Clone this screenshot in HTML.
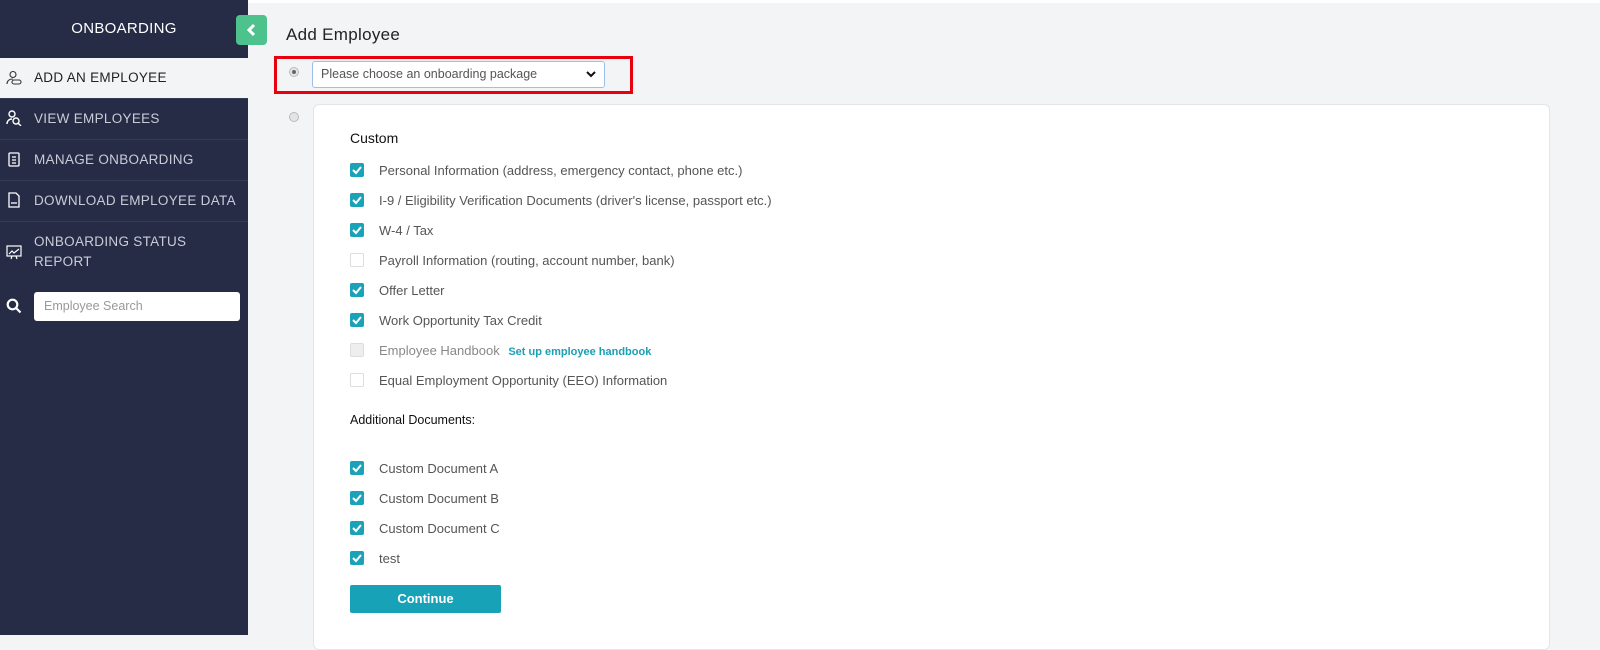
<!DOCTYPE html>
<html style="background:#f3f4f6"><head><style>
*{box-sizing:border-box;margin:0;padding:0}
body{width:1600px;height:635px;overflow:hidden;background:#f3f4f6;font-family:"Liberation Sans",sans-serif;position:relative}
.sb{position:absolute;left:0;top:0;width:248px;height:635px;background:#272c46}
.sb .hd{position:absolute;top:0;left:0;width:248px;height:58px;color:#fff;font-size:15px;text-align:center;line-height:58px;letter-spacing:.3px}
.item{position:absolute;left:0;width:248px;color:#c9ccd8;font-size:13.5px;letter-spacing:.3px;border-bottom:1px solid #353a54}
.item span{position:absolute;left:34px}
.ic{position:absolute;left:6px;width:16px;height:16px}
.act{background:#f3f4f6;color:#222;top:58px;height:41px}
.tog{position:absolute;left:236px;top:15px;width:31px;height:30px;background:#4dc28d;border-radius:4px;color:#fff;text-align:center}
.cb{position:absolute;left:350px;width:14px;height:14px;border-radius:2px;background:#1aa3b8}
.cb svg{position:absolute;left:2px;top:2px}
.cb.e{background:#fff;border:1px solid #ddd}
.cb.d{background:#eee;border:1px solid #ddd}
.lb{position:absolute;left:379px;font-size:13px;color:#555;margin-top:1px}
</style></head><body>
<div style="position:absolute;left:248px;top:0;width:1352px;height:3px;background:#fff"></div>
<div class="sb">
<div class="hd">ONBOARDING</div>
<div class="item act"><svg class="ic" style="top:12px" viewBox="0 0 16 16" fill="none" stroke="#333" stroke-width="1.1"><circle cx="7" cy="4.5" r="3"/><path d="M1 14c0-3 2-5 6-5"/><rect x="6" y="10" width="9" height="4" rx="2"/></svg><span style="top:12px">ADD AN EMPLOYEE</span></div>
<div class="item" style="top:99px;height:41px"><svg class="ic" style="top:11px" viewBox="0 0 16 16" fill="none" stroke="#fff" stroke-width="1.4"><circle cx="6" cy="4" r="3"/><path d="M1 14c0-3 2-5 5-5"/><circle cx="10" cy="11" r="3"/><path d="M12 13l3 3"/></svg><span style="top:12px">VIEW EMPLOYEES</span></div>
<div class="item" style="top:140px;height:41px"><svg class="ic" style="top:11px" viewBox="0 0 16 16" fill="none" stroke="#fff" stroke-width="1.3"><rect x="3" y="2" width="10" height="13" rx="1"/><path d="M6 6h4M6 9h4M6 12h4"/></svg><span style="top:12px">MANAGE ONBOARDING</span></div>
<div class="item" style="top:181px;height:41px"><svg class="ic" style="top:11px" viewBox="0 0 16 16" fill="none" stroke="#fff" stroke-width="1.3"><path d="M3 1h7l3 3v11H3z"/><path d="M5 11h6"/></svg><span style="top:12px">DOWNLOAD EMPLOYEE DATA</span></div>
<div class="item" style="top:222px;height:60px;border:none"><svg class="ic" style="top:22px" viewBox="0 0 16 16" fill="none" stroke="#fff" stroke-width="1.2"><rect x="1" y="2" width="14" height="10"/><path d="M3 10l3-3 2 2 5-4M5 15l1-3M11 15l-1-3"/></svg><span style="top:10px;line-height:20px">ONBOARDING STATUS<br>REPORT</span></div>
<svg style="position:absolute;left:6px;top:298px" width="16" height="16" viewBox="0 0 16 16" fill="none" stroke="#fff" stroke-width="2.2"><circle cx="6.5" cy="6.5" r="4.8"/><path d="M10 10l4.5 4.5"/></svg>
<div style="position:absolute;left:34px;top:292px;width:206px;height:29px;background:#fff;border-radius:3px;color:#999;font-size:12.5px;line-height:29px;padding-left:10px">Employee Search</div>
</div>
<div class="tog"><svg width="12" height="14" viewBox="0 0 12 14" style="margin-top:8px"><path d="M8 2L3 7l5 5" stroke="#fff" stroke-width="3" fill="none"/></svg></div>
<div style="position:absolute;left:286px;top:25px;font-size:17px;color:#222;letter-spacing:.3px">Add Employee</div>
<div style="position:absolute;left:274px;top:56px;width:359px;height:38px;border:3px solid #e8000f"></div>
<div style="position:absolute;left:289px;top:67px;width:10px;height:10px;border-radius:50%;background:#e4e4e4;border:1px solid #bbb"><div style="width:4px;height:4px;background:#666;border-radius:50%;margin:2px"></div></div>
<div style="position:absolute;left:312px;top:61px;width:293px;height:27px;background:#fff;border:1px solid #9cc0ee;border-radius:3px;font-size:12.5px;color:#555;line-height:25px;padding-left:8px">Please choose an onboarding package<svg style="position:absolute;right:8px;top:9px" width="10" height="7" viewBox="0 0 10 7"><path d="M1 1l4 4 4-4" stroke="#111" stroke-width="2" fill="none"/></svg></div>
<div style="position:absolute;left:289px;top:112px;width:10px;height:10px;border-radius:50%;background:#e4e4e4;border:1px solid #bbb"></div>
<div style="position:absolute;left:313px;top:104px;width:1237px;height:546px;background:#fff;border:1px solid #e4e5ea;border-radius:6px"></div>
<div style="position:absolute;left:350px;top:130px;font-size:14px;color:#111">Custom</div>
<div style="position:absolute;left:350px;top:413px;font-size:12.5px;color:#111">Additional Documents:</div>

<div class="cb" style="top:163px"><svg width="10" height="10" viewBox="0 0 10 10"><path d="M1 5l3 3 5-6" stroke="#fff" stroke-width="2" fill="none"/></svg></div><div class="lb" style="top:162px">Personal Information (address, emergency contact, phone etc.)</div>
<div class="cb" style="top:193px"><svg width="10" height="10" viewBox="0 0 10 10"><path d="M1 5l3 3 5-6" stroke="#fff" stroke-width="2" fill="none"/></svg></div><div class="lb" style="top:192px">I-9 / Eligibility Verification Documents (driver's license, passport etc.)</div>
<div class="cb" style="top:223px"><svg width="10" height="10" viewBox="0 0 10 10"><path d="M1 5l3 3 5-6" stroke="#fff" stroke-width="2" fill="none"/></svg></div><div class="lb" style="top:222px">W-4 / Tax</div>
<div class="cb e" style="top:253px"></div><div class="lb" style="top:252px">Payroll Information (routing, account number, bank)</div>
<div class="cb" style="top:283px"><svg width="10" height="10" viewBox="0 0 10 10"><path d="M1 5l3 3 5-6" stroke="#fff" stroke-width="2" fill="none"/></svg></div><div class="lb" style="top:282px">Offer Letter</div>
<div class="cb" style="top:313px"><svg width="10" height="10" viewBox="0 0 10 10"><path d="M1 5l3 3 5-6" stroke="#fff" stroke-width="2" fill="none"/></svg></div><div class="lb" style="top:312px">Work Opportunity Tax Credit</div>
<div class="cb d" style="top:343px"></div><div class="lb" style="top:342px;color:#888">Employee Handbook <b style="color:#1a9fb5;font-size:11px;margin-left:5px">Set up employee handbook</b></div>
<div class="cb e" style="top:373px"></div><div class="lb" style="top:372px">Equal Employment Opportunity (EEO) Information</div>

<div class="cb" style="top:461px"><svg width="10" height="10" viewBox="0 0 10 10"><path d="M1 5l3 3 5-6" stroke="#fff" stroke-width="2" fill="none"/></svg></div><div class="lb" style="top:460px">Custom Document A</div>
<div class="cb" style="top:491px"><svg width="10" height="10" viewBox="0 0 10 10"><path d="M1 5l3 3 5-6" stroke="#fff" stroke-width="2" fill="none"/></svg></div><div class="lb" style="top:490px">Custom Document B</div>
<div class="cb" style="top:521px"><svg width="10" height="10" viewBox="0 0 10 10"><path d="M1 5l3 3 5-6" stroke="#fff" stroke-width="2" fill="none"/></svg></div><div class="lb" style="top:520px">Custom Document C</div>
<div class="cb" style="top:551px"><svg width="10" height="10" viewBox="0 0 10 10"><path d="M1 5l3 3 5-6" stroke="#fff" stroke-width="2" fill="none"/></svg></div><div class="lb" style="top:550px">test</div>
<div style="position:absolute;left:350px;top:585px;width:151px;height:28px;background:#17a2b8;border-radius:2px;color:#fff;font-weight:bold;font-size:13px;text-align:center;line-height:28px">Continue</div>
</body></html>
